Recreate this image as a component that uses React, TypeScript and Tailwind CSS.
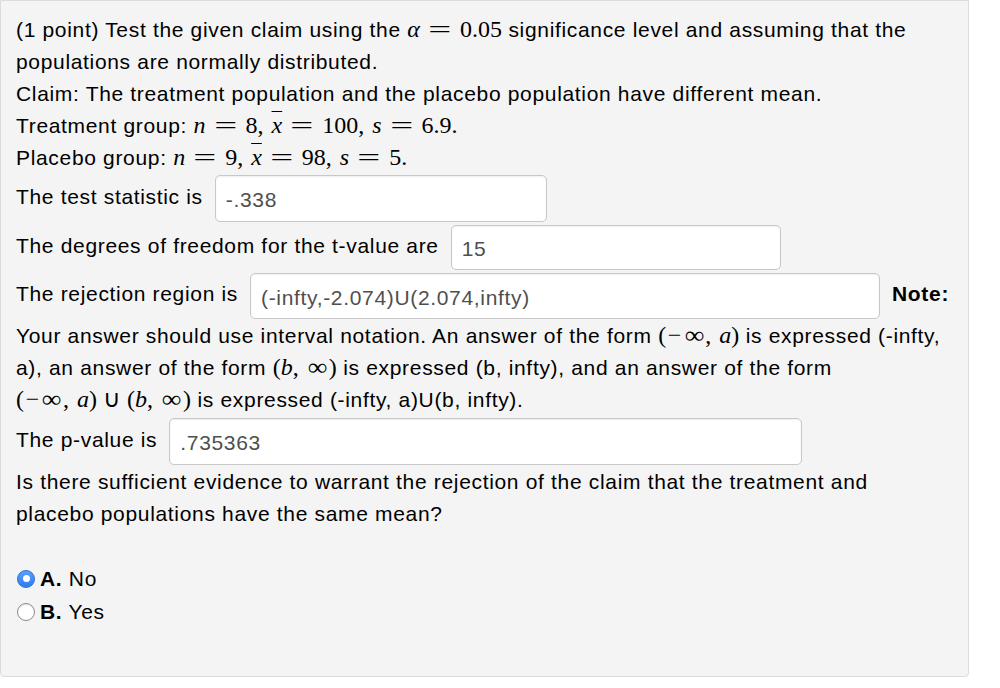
import React from 'react';

const serif = "font-['Liberation_Serif','Times_New_Roman',serif] text-[24px] leading-none tracking-normal";

function Eq() {
    return (
        <span className="inline-block w-[22px] mx-[9px] text-center">
            <span className="inline-block scale-x-[1.7]">=</span>
        </span>
    );
}

function Comma() {
    return <span className="mr-[8px]">,</span>;
}

function Inf() {
    return (
        <span className="inline-block w-[22px] text-center">
            <span className="inline-block scale-x-[1.15]">∞</span>
        </span>
    );
}

function Minus() {
    return <span className="inline-block w-[17px] text-center">−</span>;
}

function Field({ value, className }: { value: string; className: string }) {
    return (
        <div
            className={`${className} flex items-center pl-[10px] pt-[3px] bg-white border border-[#c8c8c8] rounded-[5px] shadow-[inset_0_1px_2px_rgba(0,0,0,0.07)] text-[#4f4f4f]`}
        >
            {value}
        </div>
    );
}

function Xbar() {
    return <i className="overline decoration-1">x</i>;
}

export default function App() {
    return (
        <div className="w-[1000px] h-[688px] bg-white font-['Liberation_Sans',Arial,sans-serif] text-[21px] tracking-[0.67px] text-black">
            <div className="w-[969px] h-[677px] bg-[#f4f4f4] border border-[#dcdcdc] rounded-b-[4px] pl-[15px] pt-[13px]">
                {/* Problem statement */}
                <div className="leading-8 whitespace-nowrap">
                    <div>
                        (1 point) Test the given claim using the{' '}
                        <span className={serif}>
                            <i>α</i>
                            <Eq />
                            0.05
                        </span>{' '}
                        significance level and assuming that the
                    </div>
                    <div>populations are normally distributed.</div>
                    <div>Claim: The treatment population and the placebo population have different mean.</div>
                    <div>
                        Treatment group:{' '}
                        <span className={serif}>
                            <i>n</i>
                            <Eq />
                            8<Comma />
                            <Xbar />
                            <Eq />
                            100<Comma />
                            <i>s</i>
                            <Eq />
                            6.9.
                        </span>
                    </div>
                    <div>
                        Placebo group:{' '}
                        <span className={serif}>
                            <i>n</i>
                            <Eq />
                            9<Comma />
                            <Xbar />
                            <Eq />
                            98<Comma />
                            <i>s</i>
                            <Eq />
                            5.
                        </span>
                    </div>
                </div>

                {/* Answer rows */}
                <div className="flex items-center gap-[12px] mt-px whitespace-nowrap">
                    <span className="pb-1">The test statistic is</span>
                    <Field value="-.338" className="w-[332px] h-[47px]" />
                </div>
                <div className="flex items-center gap-[12px] mt-[3px] whitespace-nowrap">
                    <span className="pb-1">The degrees of freedom for the t-value are</span>
                    <Field value="15" className="w-[330px] h-[45px]" />
                </div>
                <div className="flex items-center gap-[12px] mt-[3px] whitespace-nowrap">
                    <span className="pb-1">The rejection region is</span>
                    <Field value="(-infty,-2.074)U(2.074,infty)" className="w-[630px] h-[46px]" />
                    <span className="pb-1 font-bold">Note:</span>
                </div>

                <div className="leading-8 mt-px whitespace-nowrap">
                    <div>
                        Your answer should use interval notation. An answer of the form{' '}
                        <span className={serif}>
                            (<Minus />
                            <Inf />
                            <Comma />
                            <i>a</i>)
                        </span>{' '}
                        is expressed (-infty,
                    </div>
                    <div>
                        a), an answer of the form{' '}
                        <span className={serif}>
                            (<i>b</i>
                            <Comma />
                            <Inf />)
                        </span>{' '}
                        is expressed (b, infty), and an answer of the form
                    </div>
                    <div>
                        <span className={serif}>
                            (<Minus />
                            <Inf />
                            <Comma />
                            <i>a</i>)<span className="mx-[6px]">∪</span>(<i>b</i>
                            <Comma />
                            <Inf />)
                        </span>{' '}
                        is expressed (-infty, a)U(b, infty).
                    </div>
                </div>

                <div className="flex items-center gap-[12px] mt-[2px] whitespace-nowrap">
                    <span className="pb-1">The p-value is</span>
                    <Field value=".735363" className="w-[633px] h-[47px]" />
                </div>

                <div className="leading-8 mt-px whitespace-nowrap">
                    <div>Is there sufficient evidence to warrant the rejection of the claim that the treatment and</div>
                    <div>placebo populations have the same mean?</div>
                </div>

                {/* Choices */}
                <div className="mt-8 flex flex-col">
                    <label className="flex items-center h-[33px] gap-[5px]">
                        <span className="w-[18px] h-[18px] ml-px rounded-full bg-gradient-to-b from-[#5aa0fb] to-[#2f7cf0] border border-[#2a6fd8] flex items-center justify-center">
                            <span className="w-[7px] h-[7px] rounded-full bg-white" />
                        </span>
                        <span>
                            <b>A.</b> No
                        </span>
                    </label>
                    <label className="flex items-center h-[33px] gap-[5px]">
                        <span className="w-[18px] h-[18px] ml-px rounded-full bg-white border border-[#8c8c8c] shadow-[inset_0_1px_1px_rgba(0,0,0,0.1)]" />
                        <span>
                            <b>B.</b> Yes
                        </span>
                    </label>
                </div>
            </div>
        </div>
    );
}
